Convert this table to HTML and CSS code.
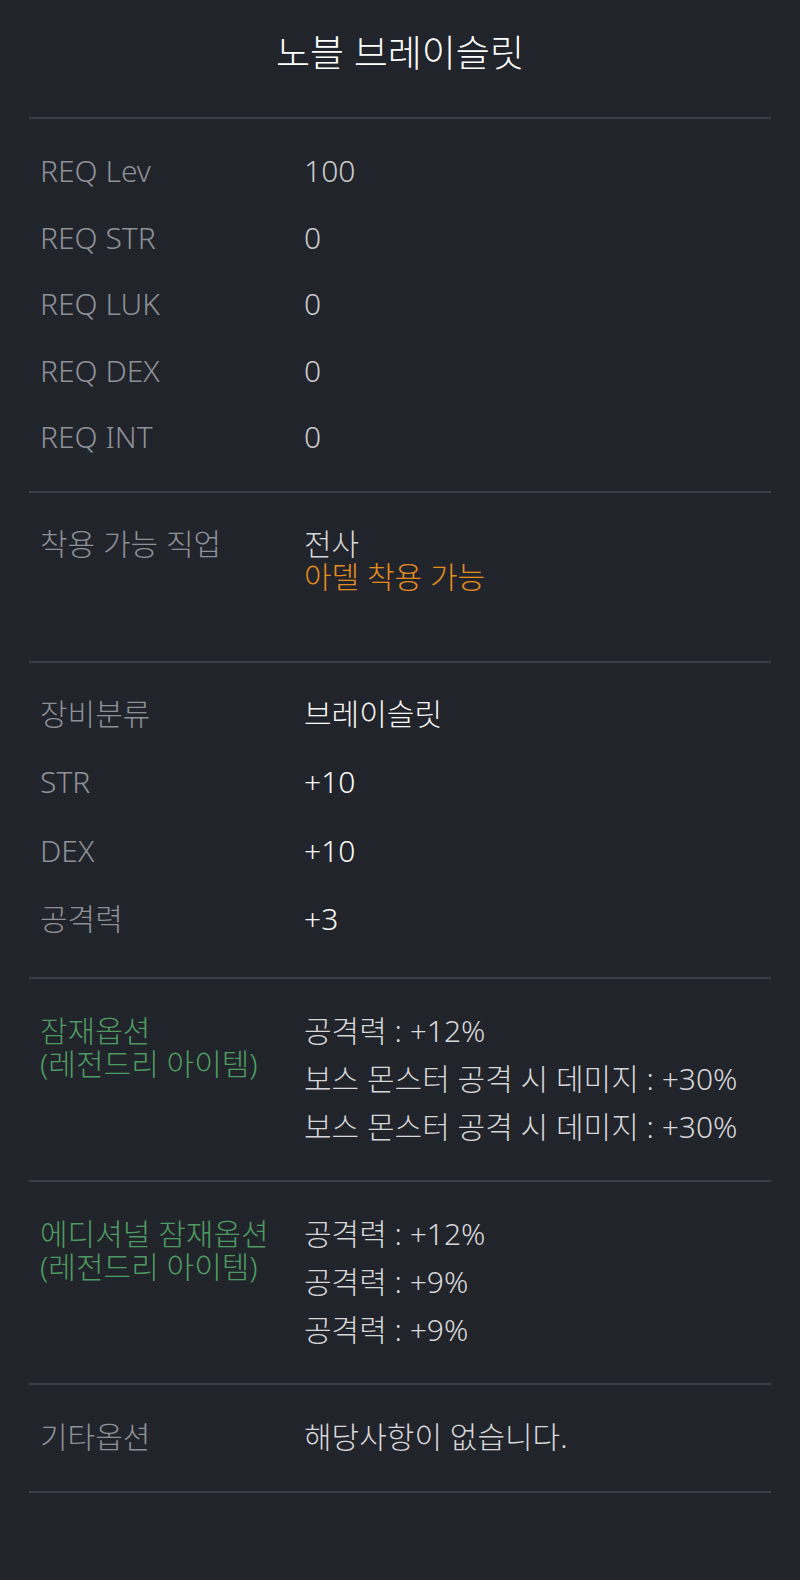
FILE: index.html
```html
<!DOCTYPE html>
<html lang="ko">
<head>
<meta charset="utf-8">
<title>노블 브레이슬릿</title>
<link rel="stylesheet" href="styles.css">
</head>
<body>
<main class="page">
  <h1 class="title">노블 브레이슬릿</h1>

  <section class="sec sec-req">
    <div class="row"><div class="label">REQ Lev</div><div class="val val-dim">100</div></div>
    <div class="row"><div class="label">REQ STR</div><div class="val val-dim">0</div></div>
    <div class="row"><div class="label">REQ LUK</div><div class="val val-dim">0</div></div>
    <div class="row"><div class="label">REQ DEX</div><div class="val val-dim">0</div></div>
    <div class="row"><div class="label">REQ INT</div><div class="val val-dim">0</div></div>
  </section>

  <section class="sec sec-job">
    <div class="row">
      <div class="label">착용 가능 직업</div>
      <div class="val">
        <div class="val-light">전사</div>
        <div class="val-orange">아델 착용 가능</div>
      </div>
    </div>
  </section>

  <section class="sec sec-stat">
    <div class="row"><div class="label">장비분류</div><div class="val val-white">브레이슬릿</div></div>
    <div class="row"><div class="label">STR</div><div class="val val-white">+10</div></div>
    <div class="row"><div class="label">DEX</div><div class="val val-white">+10</div></div>
    <div class="row"><div class="label">공격력</div><div class="val val-white">+3</div></div>
  </section>

  <section class="sec sec-pot">
    <div class="row">
      <div class="label label-green">잠재옵션<br>(레전드리 아이템)</div>
      <div class="val val-light">
        <div class="line">공격력 : +12%</div>
        <div class="line">보스 몬스터 공격 시 데미지 : +30%</div>
        <div class="line">보스 몬스터 공격 시 데미지 : +30%</div>
      </div>
    </div>
  </section>

  <section class="sec sec-pot">
    <div class="row">
      <div class="label label-green">에디셔널 잠재옵션<br>(레전드리 아이템)</div>
      <div class="val val-light">
        <div class="line">공격력 : +12%</div>
        <div class="line">공격력 : +9%</div>
        <div class="line">공격력 : +9%</div>
      </div>
    </div>
  </section>

  <section class="sec sec-etc">
    <div class="row"><div class="label">기타옵션</div><div class="val val-light line">해당사항이 없습니다.</div></div>
  </section>
</main>
</body>
</html>
```

FILE: styles.css
```css
html, body {
  margin: 0;
  padding: 0;
  background: #22242b;
}

body {
  font-family: "Noto Sans", "Noto Sans CJK KR", sans-serif;
  font-size: 30px;
  font-weight: 300;
  color: #d2d3d5;
  min-height: 1580px;
}

.page {
  padding: 0 29px;
}

.title {
  margin: 0;
  height: 117px;
  line-height: 105px;
  text-align: center;
  font-size: 37px;
  font-weight: 300;
  color: #ffffff;
}

.sec {
  border-top: 2px solid #3c3f47;
}

.sec:last-child {
  border-bottom: 2px solid #3c3f47;
}

.row {
  display: grid;
  grid-template-columns: 264px 1fr;
  padding-left: 11px;
}

.label {
  color: #8d9097;
}

.label-green {
  color: #4e9b61;
  line-height: 33.5px;
  padding-top: 7px;
}

.val-dim { color: #c9cacd; }
.val-light { color: #d6d7d9; }
.val-white { color: #f8f8f8; }
.val-orange { color: #e38c1e; }

/* REQ section */
.sec-req {
  padding: 19px 0 20px;
}
.sec-req .row {
  line-height: 66.5px;
}

/* job section */
.sec-job {
  padding: 34px 0 68px;
}
.sec-job .row {
  line-height: 33px;
}

/* stats section */
.sec-stat {
  padding: 17px 0 23px;
}
.sec-stat .row {
  line-height: 68.5px;
}

/* potential sections */
.sec-pot {
  padding: 28px 0 29px;
}
.line {
  line-height: 48px;
  white-space: nowrap;
}

/* etc */
.sec-etc {
  padding: 28px 0 30px;
}
```
